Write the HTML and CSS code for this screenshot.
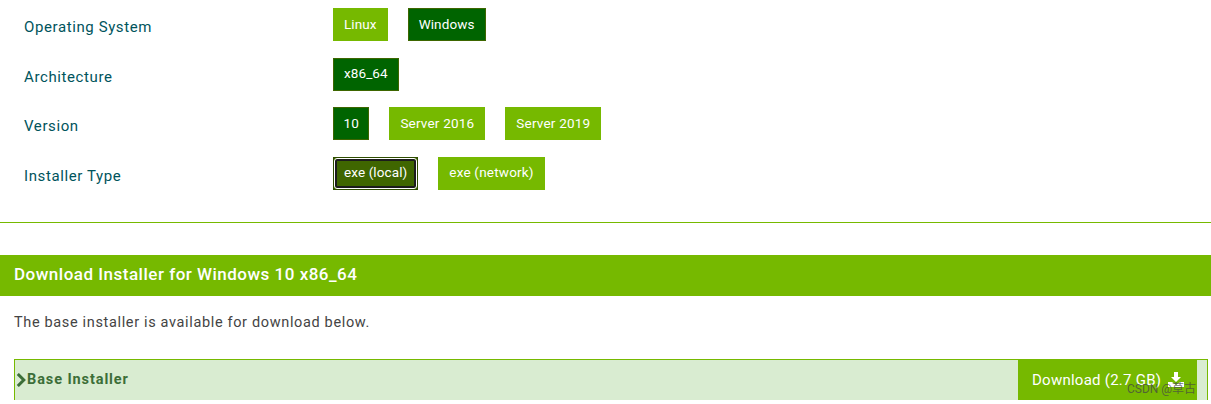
FILE: index.html
```html
<!DOCTYPE html>
<html lang="en">
	<head>
		<meta charset="UTF-8" />
		<title>Download Installer</title>
		<link rel="stylesheet" href="styles.css">
	</head>
	<body>
		<div class="selector">
			<div class="selector-row">
				<div class="selector-label">Operating System</div>
				<div class="selector-options">
					<button class="option">Linux</button>
					<button class="option selected">Windows</button>
				</div>
			</div>
			<div class="selector-row">
				<div class="selector-label">Architecture</div>
				<div class="selector-options">
					<button class="option selected">x86_64</button>
				</div>
			</div>
			<div class="selector-row">
				<div class="selector-label">Version</div>
				<div class="selector-options">
					<button class="option selected short">10</button>
					<button class="option long">Server 2016</button>
					<button class="option long">Server 2019</button>
				</div>
			</div>
			<div class="selector-row">
				<div class="selector-label">Installer Type</div>
				<div class="selector-options">
					<button class="option focused">exe (local)</button>
					<button class="option long">exe (network)</button>
				</div>
			</div>
		</div>

		<h2 class="download-title">Download Installer for Windows 10 x86_64</h2>
		<p class="download-note">The base installer is available for download below.</p>

		<div class="installer">
			<div class="installer-name">
				<svg class="chevron" viewBox="0 0 10 14" width="10" height="14">
					<path d="M1.8 1 L7.8 7 L1.8 13" fill="none" stroke="#3c6e38" stroke-width="3" />
				</svg>
				Base Installer
			</div>
			<a class="installer-link">
				Download (2.7 GB)
				<svg class="download-icon" viewBox="0 0 16 15" width="16" height="15">
					<path d="M6 0 H10 V5 H13 L8 10 L3 5 H6 Z" fill="#fff" />
					<path d="M0 10 H4 L8 13 L12 10 H16 V15 H0 Z" fill="#fff" />
				</svg>
			</a>
		</div>

		<div class="watermark">CSDN @草古</div>
	</body>
</html>
```

FILE: styles.css
```css
body {
	font-family: 'Roboto', 'Noto Sans CJK SC', sans-serif;
	margin: 0;
	padding: 0;
	background-color: #fff;
	color: #333;
	height: 404px;
	overflow: hidden;
	position: relative;
}

.selector {
	padding: 8px 0 32px;
	border-bottom: 1px solid #76b900;
}

.selector-row {
	display: flex;
	height: 33px;
	margin-bottom: 16.5px;
}

.selector-row:last-child {
	margin-bottom: 0;
}

.selector-label {
	width: 333px;
	padding: 10px 0 0 24px;
	box-sizing: border-box;
	font-size: 15px;
	letter-spacing: 0.6px;
	line-height: 18px;
	color: #00545c;
}

.selector-options {
	display: flex;
	gap: 20px;
}

.option {
	position: relative;
	height: 33px;
	padding: 0 10px 2px;
	border: 1px solid #76b900;
	background-color: #76b900;
	color: #fff;
	font-family: inherit;
	font-size: 13.5px;
	letter-spacing: 0.1px;
}

.option.selected {
	background-color: #006400;
	border-color: #3d6600;
}

.option.short {
	padding: 0 9.5px 2px;
}

.option.long {
	letter-spacing: 0.2px;
}

.option.focused {
	background-color: #3f6600;
	border-color: #2f4d00;
}

/* focus ring, white line then black inside it */
.option.focused::before {
	content: '';
	position: absolute;
	inset: 0;
	border: 1px solid #fff;
	border-radius: 3px;
	box-shadow: inset 0 0 0 2px #1c1c1c;
}

.download-title {
	margin: 32px 0 0;
	height: 41px;
	padding-left: 14px;
	background-color: #76b900;
	color: #fff;
	font-size: 17px;
	font-weight: 500;
	letter-spacing: 0.5px;
	line-height: 38px;
}

.download-note {
	margin: 18px 0 0 14px;
	font-size: 14.5px;
	letter-spacing: 0.65px;
	line-height: 18px;
	color: #444;
}

.installer {
	display: flex;
	justify-content: space-between;
	margin: 27px 3px 0 14px;
	border: 1px solid #76b900;
	border-bottom: none;
	padding-right: 10px;
	height: 40px;
	background: #d9ecd1;
}

.installer-name {
	display: flex;
	align-items: center;
	gap: 1px;
	font-size: 14.5px;
	font-weight: 700;
	letter-spacing: 0.9px;
	color: #3c6e38;
}

.chevron {
	margin-left: 1px;
}

.installer-link {
	display: flex;
	align-items: center;
	gap: 7px;
	width: 179px;
	box-sizing: border-box;
	padding-left: 14px;
	background-color: #76b900;
	color: #fff;
	font-size: 15px;
	letter-spacing: 0.25px;
}

.watermark {
	position: absolute;
	left: 1127px;
	top: 382px;
	font-size: 12px;
	line-height: 14px;
	color: rgba(70, 70, 70, 0.75);
}
```
